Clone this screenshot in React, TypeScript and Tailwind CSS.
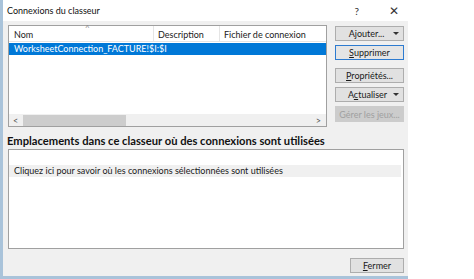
import React from "react";

const font = { fontFamily: 'Lato, "Noto Sans", sans-serif' };

function Btn({ children, arrow, focused, disabled, className = "" }: { children: React.ReactNode; arrow?: boolean; focused?: boolean; disabled?: boolean; className?: string }) {
  return (
    <div
      className={`relative flex items-center justify-center h-[15px] text-[9px] leading-none whitespace-nowrap ${
        focused ? "border border-[#2d7bd0] bg-[#e5e5e5]" : disabled ? "border border-[#cccccc] bg-[#cccccc]" : "border border-[#adadad] bg-[#e1e1e1]"
      } ${disabled ? "text-[#a0a0a0]" : "text-[#1a1a1a]"} ${className}`}
    >
      <span>{children}</span>
      {arrow && (
        <span className="absolute right-[4px] top-[5px] w-0 h-0 border-l-[3px] border-r-[3px] border-t-[3px] border-l-transparent border-r-transparent border-t-[#333]" />
      )}
    </div>
  );
}

export default function App() {
  return (
    <div className="w-[474px] h-[279px] bg-white flex" style={font}>
      <div className="w-[408px] h-[279px] border-l-[3px] border-b-[3px] border-[#a9c3da] bg-[#f0f0f0] flex flex-col">
        <div className="h-[21px] bg-white flex items-center pl-[4px] pr-[8px]">
          <span className="text-[9px] text-[#111]">Connexions du classeur</span>
          <span className="ml-auto text-[10px] text-[#333] mr-[30px] mt-[2px]">?</span>
          <span className="text-[12px] text-[#333] mr-[1px]">✕</span>
        </div>
        <div className="flex pl-[5px] pt-[4px] pr-[4px] gap-[8px]">
          <div className="w-[319px] h-[102px] border border-[#a0a0a0] bg-white flex flex-col">
            <div className="relative h-[16px] flex text-[9px] text-[#1a1a1a] leading-none border-b border-[#e5e5e5]">
              <div className="w-[145px] pl-[5px] pt-[4px] border-r border-[#e5e5e5]">Nom</div>
              <div className="w-[66px] pl-[4px] pt-[4px] border-r border-[#e5e5e5]">Description</div>
              <div className="pl-[4px] pt-[4px]">Fichier de connexion</div>
              <span className="absolute left-[76px] top-[-2px] text-[8px] text-[#888]">^</span>
            </div>
            <div className="h-[12px] mt-[1px] bg-[#0078d7] text-white text-[9px] leading-[12px] pl-[5px]">WorksheetConnection_FACTURE!$I:$I</div>
            <div className="flex-1" />
            <div className="h-[12px] flex items-center bg-[#f0f0f0] text-[9px] text-[#555] leading-none">
              <span className="w-[14px] pl-[4px]">&lt;</span>
              <div className="w-[103px] h-[11px] bg-[#cdcdcd]" />
              <span className="ml-auto pr-[5px]">&gt;</span>
            </div>
          </div>
          <div className="w-[69px] flex flex-col gap-[4px] pt-[1px]">
            <Btn arrow>
              <span className="mr-[6px]">A<u>j</u>outer...</span>
            </Btn>
            <Btn focused>
              <u>S</u>upprimer
            </Btn>
            <Btn className="mt-[4px]">
              <u>P</u>ropriétés...
            </Btn>
            <Btn arrow>
              <span className="mr-[4px]">A<u>c</u>tualiser</span>
            </Btn>
            <Btn disabled className="h-[16px]">
              Gérer les jeux...
            </Btn>
          </div>
        </div>
        <div className="pl-[4px] pt-[8px] text-[11.2px] font-bold text-[#111] leading-none whitespace-nowrap">
          Emplacements dans ce classeur où des connexions sont utilisées
        </div>
        <div className="ml-[5px] mt-[3px] w-[396px] h-[100px] border border-[#a0a0a0] bg-white pt-[15px]">
          <div className="h-[12px] bg-[#f0f0f0] text-[9px] leading-[12px] text-[#1a1a1a] pl-[5px] mr-[2px]">
            Cliquez ici pour savoir où les connexions sélectionnées sont utilisées
          </div>
        </div>
        <div className="flex justify-end pr-[4px] pt-[9px]">
          <Btn className="w-[54px] h-[15px]">
            <u>F</u>ermer
          </Btn>
        </div>
      </div>
    </div>
  );
}
